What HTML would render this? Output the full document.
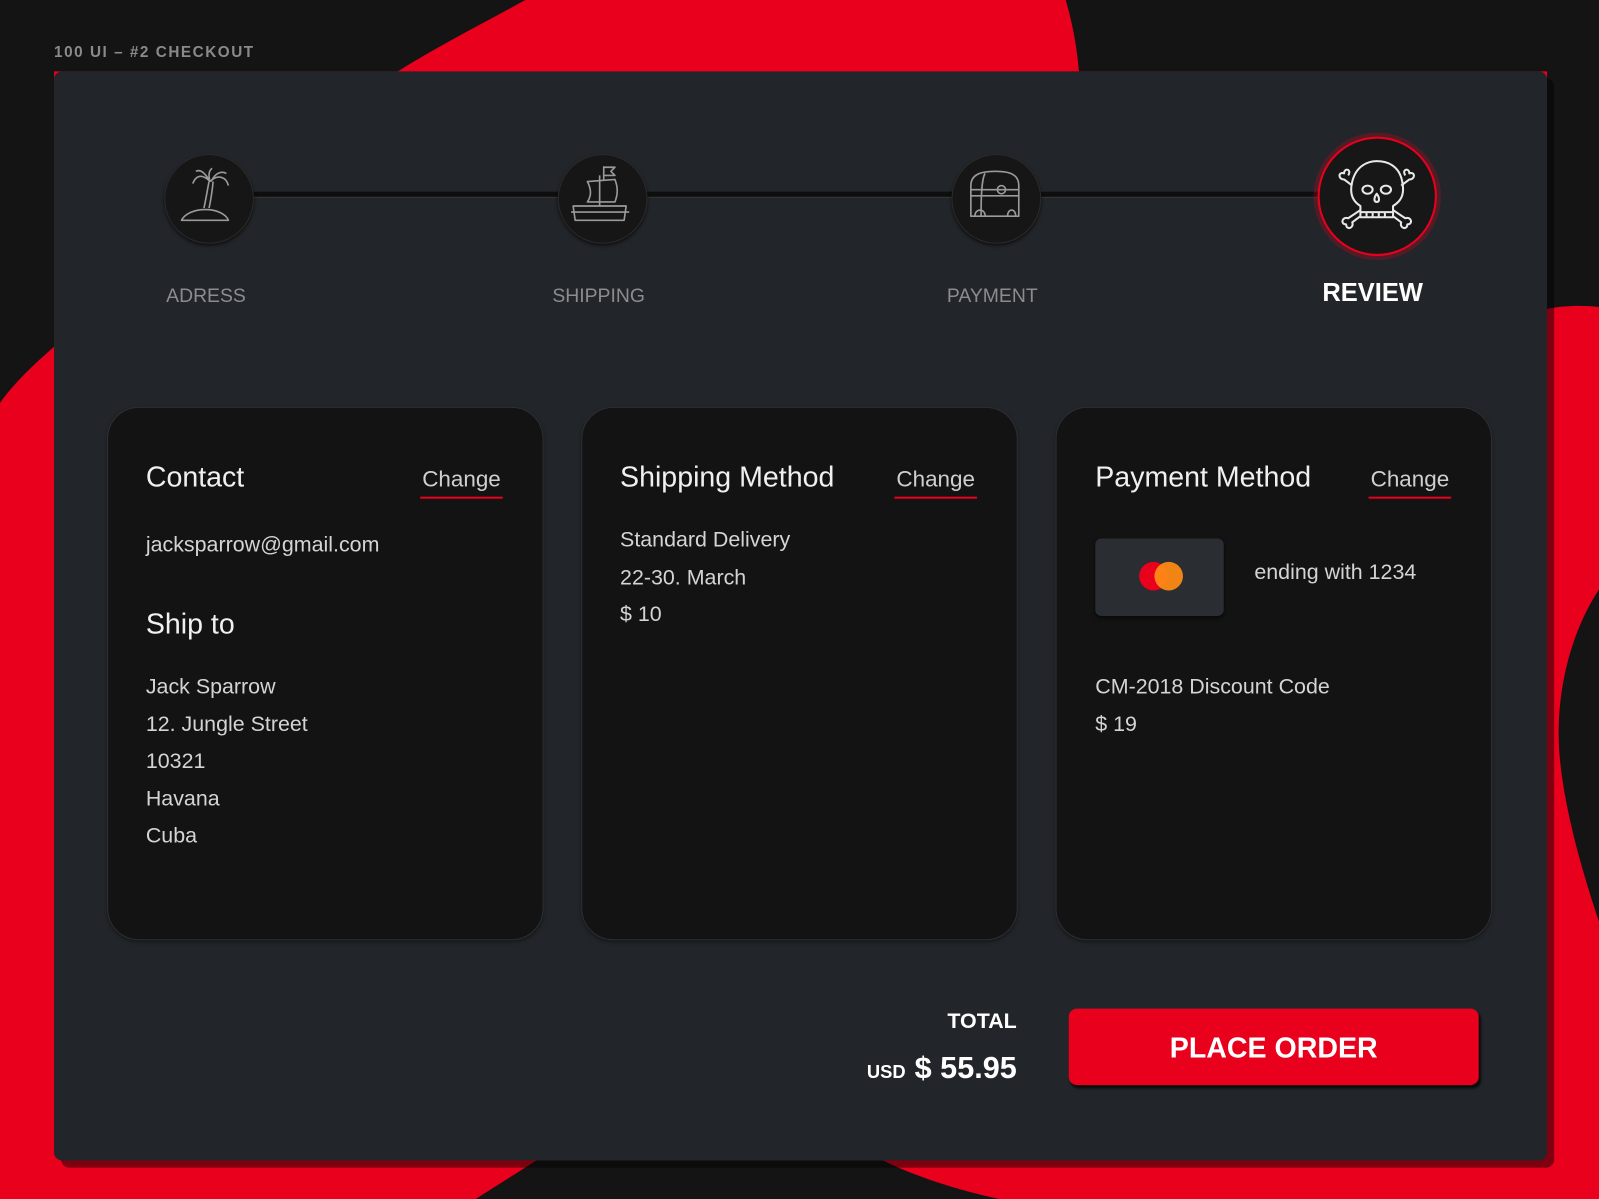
<!DOCTYPE html>
<html><head><meta charset="utf-8"><style>
*{margin:0;padding:0;box-sizing:border-box}
html,body{width:1599px;height:1199px;overflow:hidden;background:#141414}
#s{position:absolute;left:0;top:0;width:1568px;height:1176px;transform:scale(1.0198);transform-origin:0 0;font-family:"Liberation Sans",sans-serif}
.abs{position:absolute}
.card{left:53px;top:70px;width:1464px;height:1068px;background:#222529;border-radius:8px;box-shadow:7px 7px 0 rgba(0,0,0,.45)}
.lbl{color:#8a8c8f;font-size:19px;top:280px;width:200px;text-align:center}
.circ{width:88px;height:88px;border-radius:50%;background:#161616;box-shadow:0 2px 3px rgba(0,0,0,.6),inset 0 0 0 1px #2b2b2b}
.panel{top:400px;width:426px;height:521px;background:#131313;border-radius:30px;box-shadow:0 0 0 1px #2c2f33,0 2px 4px rgba(0,0,0,.5)}
.h{color:#f0f0f0;font-size:28px;position:absolute}
.ch{color:#cfcfcf;font-size:22px;position:absolute;border-bottom:2px solid #e8001c;padding:0 2px 4px}
.t{color:#d4d4d4;font-size:21px;position:absolute;line-height:36.5px}
</style></head><body><div id="s">
<svg class="abs" style="left:0;top:0" width="1568" height="1176">
<rect width="1568" height="1176" fill="#e8001c"/>
<path d="M0 0 L515 0 C470 25 430 45 390 70 L53 70 L53 340 C30 360 12 378 0 395 Z" fill="#141414"/>
<path d="M1045 0 L1568 0 L1568 301 C1550 299 1530 300 1517 303 L1517 70 L1058 70 C1056 45 1051 20 1045 0 Z" fill="#141414"/>
<path d="M1568 578 C1540 620 1525 680 1529 737 C1533 790 1550 850 1568 904 Z" fill="#141414"/>
<path d="M466 1176 L526 1138 L866 1138 C890 1150 930 1165 981 1176 Z" fill="#141414"/>
</svg>
<div class="abs" style="left:53px;top:43px;color:#8a8a8a;font-size:15px;font-weight:bold;letter-spacing:1.5px">100 UI – #2 CHECKOUT</div>
<div class="abs card"></div>
<div class="abs" style="left:205px;top:188px;width:1145px;height:6px;background:#0e0e0e;border-bottom:1px solid #3a3a3a"></div>
<div class="abs circ" style="left:161px;top:151px"></div>
<div class="abs circ" style="left:547px;top:151px"></div>
<div class="abs circ" style="left:933px;top:151px"></div>
<div class="abs" style="left:1292px;top:134px;width:117px;height:117px;border-radius:50%;background:#171717;border:2px solid #e8001c;box-shadow:0 0 0 4px rgba(232,0,28,.25)"></div>
<svg class="abs" style="left:0;top:0" width="1568" height="400" fill="none" stroke="#9a9a9a" stroke-width="1.6" stroke-linejoin="round">
<path d="M178 216 C185 202 218 202 224 216 Z"/>
<path d="M200 204 C202 195 203 188 205 178 M205 204 C207 195 208 188 209 178"/>
<path d="M206 178 C198 170 192 172 189 180 M206 178 C214 170 222 174 224 182 M206 178 C200 168 196 166 192 168 M207 178 C212 168 218 168 222 170 M206 178 C204 172 205 167 208 165"/>
<path d="M562 202 L614 202 L612 216 L564 216 Z M560 208 L617 208"/>
<path d="M588 172 L588 202 M576 178 C580 186 580 192 576 198 L603 198 C606 190 606 184 603 176 Z"/>
<path d="M592 163 L592 176 M592 164 L603 164 L599 168 L603 172 L592 172"/>
<path d="M952 212 L952 182 C952 172 960 168 976 168 C992 168 999 172 999 182 L999 212 Z M952 186 L999 186 M952 192 L999 192 M966 170 C962 176 962 200 962 212"/>
<circle cx="982" cy="186" r="4"/>
<path d="M956 212 C956 204 966 204 966 212 M988 212 C988 204 996 204 996 212"/>
<g stroke="#e8e8e8" stroke-width="2">
<path d="M1334 213 L1334 202 C1324 196 1324 186 1326 178 C1330 162 1342 158 1350 158 C1360 158 1372 162 1375 178 C1377 188 1376 196 1366 202 L1366 213 Z"/>
<path d="M1334 208 L1366 208 M1340 208 L1340 213 M1346 208 L1346 213 M1352 208 L1352 213 M1358 208 L1358 213"/>
<ellipse cx="1341" cy="186" rx="5" ry="4"/><ellipse cx="1359" cy="186" rx="5" ry="4"/>
<path d="M1350 190 C1347 194 1347 198 1350 198 C1353 198 1353 194 1350 190Z"/>
<path d="M1326 182 L1318 176 C1312 176 1312 168 1318 170 C1318 164 1326 166 1322 172 M1374 182 L1382 176 C1388 176 1388 168 1382 170 C1382 164 1374 166 1378 172"/>
<path d="M1334 206 L1322 214 C1316 212 1314 220 1320 220 C1320 226 1328 224 1326 218 L1334 212 M1366 206 L1378 214 C1384 212 1386 220 1380 220 C1380 226 1372 224 1374 218 L1366 212"/>
</g>
</svg>
<div class="abs lbl" style="left:102px">ADRESS</div>
<div class="abs lbl" style="left:487px">SHIPPING</div>
<div class="abs lbl" style="left:873px">PAYMENT</div>
<div class="abs" style="left:1246px;top:273px;width:200px;text-align:center;color:#fff;font-size:25px;font-weight:bold">REVIEW</div>

<div class="abs panel" style="left:106px"></div>
<div class="abs panel" style="left:571px"></div>
<div class="abs panel" style="left:1036px"></div>

<div class="h" style="left:143px;top:452px">Contact</div>
<div class="ch" style="left:412px;top:457px">Change</div>
<div class="t" style="left:143px;top:517px">jacksparrow@gmail.com</div>
<div class="h" style="left:143px;top:596px">Ship to</div>
<div class="t" style="left:143px;top:656px">Jack Sparrow<br>12. Jungle Street<br>10321<br>Havana<br>Cuba</div>

<div class="h" style="left:608px;top:452px">Shipping Method</div>
<div class="ch" style="left:877px;top:457px">Change</div>
<div class="t" style="left:608px;top:512px">Standard Delivery<br>22-30. March<br>$ 10</div>

<div class="h" style="left:1074px;top:452px">Payment Method</div>
<div class="ch" style="left:1342px;top:457px">Change</div>
<div class="abs" style="left:1074px;top:528px;width:126px;height:76px;border-radius:6px;background:#2a2d31;box-shadow:0 2px 3px rgba(0,0,0,.6)"></div>
<div class="abs" style="left:1117px;top:551px;width:28px;height:28px;border-radius:50%;background:#e8001c"></div>
<div class="abs" style="left:1132px;top:551px;width:28px;height:28px;border-radius:50%;background:rgba(255,140,20,.93)"></div>
<div class="t" style="left:1230px;top:544px">ending with 1234</div>
<div class="t" style="left:1074px;top:656px">CM-2018 Discount Code<br>$ 19</div>

<div class="abs" style="left:797px;top:990px;width:200px;text-align:right;color:#fff;font-size:21px;font-weight:bold">TOTAL</div>
<div class="abs" style="left:697px;top:1031px;width:300px;text-align:right;color:#fff;font-weight:bold"><span style="font-size:18px">USD</span>&nbsp; <span style="font-size:30px">$ 55.95</span></div>
<div class="abs" style="left:1048px;top:989px;width:402px;height:75px;border-radius:8px;background:#e8001c;box-shadow:2px 3px 2px rgba(0,0,0,.7);color:#fff;font-size:28px;font-weight:bold;text-align:center;line-height:77px">PLACE ORDER</div>
</div></body></html>
